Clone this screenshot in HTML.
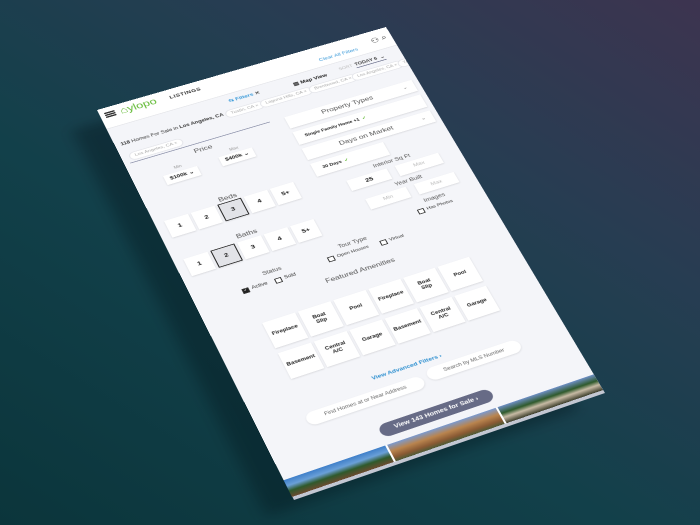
<!DOCTYPE html>
<html><head><meta charset="utf-8"><style>
*{margin:0;padding:0;box-sizing:border-box}
html,body{width:700px;height:525px;overflow:hidden}
body{background:linear-gradient(32deg,#0b353b 0%,#12404a 40%,#273d52 70%,#3d3450 100%);font-family:"Liberation Sans",sans-serif;position:relative}
.sc{position:absolute;left:0;top:0;width:320px;height:560px;transform-origin:0 0;transform:matrix3d(0.948413,-0.256206,0,0.00011732,0.297670,0.605041,0,-0.00017310,0,0,1,0,97,110,0,1)}
.edge{background:#c3c7d2}
.shadow{background:rgba(0,15,20,.35);filter:blur(8px)}
.pg{background:#f4f5f9;overflow:hidden}
.a{position:absolute;white-space:nowrap}
.t{font-size:6px;color:#333}
.lbl{font-size:8.5px;color:#555;transform:translateX(-50%)}
.box{position:absolute;background:#fff;box-shadow:0 1px 2px rgba(0,0,0,.12);font-size:7.5px;font-weight:bold;color:#222;display:flex;align-items:center;justify-content:center;text-align:center;line-height:1.1}
.sel{background:#e2e3e8;border:1.5px solid #222}
.tag{position:absolute;background:#fff;border:1px solid #e4e5ea;border-radius:8px;font-size:5.5px;color:#aaa;padding:2px 5px;white-space:nowrap}
.pill{position:absolute;background:#fff;border-radius:9px;box-shadow:0 1px 2px rgba(0,0,0,.1);font-size:6px;color:#666;display:flex;align-items:center;justify-content:center}
.cb{position:absolute;width:7px;height:7px;border:1px solid #333;background:#fff}
.amen{width:34px;height:36px;font-size:6px}
</style></head><body>
<div class="sc shadow" style="left:-25px;top:20px"></div>
<div class="sc edge" style="left:2px;top:3px"></div>
<div class="sc pg">
 <div class="a" style="left:0;top:0;width:320px;height:30px;background:#fff"></div>
 <div class="a" style="left:5px;top:7px;width:11px;height:1.5px;background:#333;box-shadow:0 3px 0 #333,0 6px 0 #333"></div>
 <div class="a" style="left:21px;top:3px;font-size:13px;color:#5fb931">⌂ylopo</div>
 <div class="a" style="left:74px;top:9px;font-size:6.5px;font-weight:bold;color:#333;letter-spacing:.5px">LISTINGS</div>
 <div class="a" style="left:236px;top:17px;font-size:6.5px;color:#3a9ad9">Clear All Filters</div>
 <div class="a" style="left:297px;top:10px;font-size:10px;color:#222">⚇</div>
 <div class="a" style="left:309px;top:9px;font-size:10px;color:#222">⌕</div>
 <div class="a" style="left:128px;top:37px;font-size:6.5px;font-weight:bold;color:#3a9ad9">⇆ Filters <span style="color:#555">✕</span></div>
 <div class="a" style="left:198px;top:40px;font-size:6.5px;font-weight:bold;color:#222">▥ Map View</div>
 <div class="a" style="left:250px;top:39px;font-size:5.5px;color:#bbb">SORT</div>
 <div class="a" style="left:268px;top:38px;font-size:6px;font-weight:bold;color:#444;border-bottom:1px solid #6a6f8a;padding-bottom:1px">TODAY 6 &nbsp;⌄</div>
 <div class="a" style="left:0;top:30px;width:320px;height:1px;background:#e5e6ea"></div>
 <div class="a t" style="left:6px;top:55px;font-size:6px"><b>118</b> Homes For Sale in <b>Los Angeles, CA</b></div>
 <div class="tag" style="left:118px;top:53px">Tustin, CA ×</div>
 <div class="tag" style="left:156px;top:53px">Laguna Hills, CA ×</div>
 <div class="tag" style="left:210px;top:53px">Brentwood, CA ×</div>
 <div class="tag" style="left:258px;top:53px">Los Angeles, CA ×</div>
 <div class="tag" style="left:310px;top:53px">Tustin, CA</div>
 <div class="tag" style="left:8px;top:72px">Los Angeles, CA ×</div>
 <div class="a" style="left:6px;top:86px;width:150px;height:1px;background:#8a8fa8"></div>

 <div class="a lbl" style="left:80px;top:91px">Price</div>
 <div class="a" style="left:44px;top:108px;font-size:5px;color:#999">Min</div>
 <div class="a" style="left:104px;top:106px;font-size:5px;color:#999">Max</div>
 <div class="box" style="left:30px;top:117px;width:36px;height:14px;font-size:6.5px">$100k ⌄</div>
 <div class="box" style="left:90px;top:114px;width:36px;height:14px;font-size:6.5px">$400k ⌄</div>

 <div class="box" style="left:172px;top:86px;width:142px;height:18px;font-weight:normal;font-size:8.5px;color:#555;justify-content:space-between;padding:0 8px 0 38px">Property Types <span style="font-size:6px;color:#777">⌄</span></div>
 <div class="box" style="left:172px;top:110px;width:142px;height:20px;font-size:5.5px;justify-content:flex-start;padding-left:10px">Single Family Home +1 <span style="color:#5fb931;margin-left:3px">✓</span></div>
 <div class="box" style="left:172px;top:136px;width:142px;height:18px;font-weight:normal;font-size:8.5px;color:#555;justify-content:space-between;padding:0 8px 0 38px">Days on Market <span style="font-size:6px;color:#777">⌄</span></div>
 <div class="box" style="left:172px;top:160px;width:80px;height:20px;font-size:5.5px;justify-content:flex-start;padding-left:10px">30 Days <span style="color:#5fb931;margin-left:3px">✓</span></div>

 <div class="a lbl" style="left:250px;top:186px;font-size:7px">Interior Sq Ft</div>
 <div class="box" style="left:197px;top:197px;width:44px;height:16px">25</div>
 <div class="box" style="left:250px;top:197px;width:48px;height:16px;font-weight:normal;color:#bbb;font-size:6.5px">Max</div>
 <div class="a lbl" style="left:255px;top:219px;font-size:7px">Year Built</div>
 <div class="box" style="left:205px;top:229px;width:44px;height:16px;font-weight:normal;color:#bbb;font-size:6.5px">Min</div>
 <div class="box" style="left:258px;top:229px;width:44px;height:16px;font-weight:normal;color:#bbb;font-size:6.5px">Max</div>
 <div class="a lbl" style="left:270px;top:252px;font-size:7px">Images</div>
 <div class="cb" style="left:247px;top:264px"></div>
 <div class="a t" style="left:257px;top:264px;font-size:5.5px">Has Photos</div>

 <div class="a lbl" style="left:79px;top:166px">Beds</div>
 <div class="box" style="left:10px;top:177px;width:25px;height:25px">1</div>
 <div class="box" style="left:38px;top:177px;width:25px;height:25px">2</div>
 <div class="box sel" style="left:66px;top:177px;width:25px;height:25px">3</div>
 <div class="box" style="left:94px;top:177px;width:25px;height:25px">4</div>
 <div class="box" style="left:122px;top:177px;width:25px;height:25px">5+</div>
 <div class="a lbl" style="left:79px;top:221px">Baths</div>
 <div class="box" style="left:10px;top:234px;width:25px;height:25px">1</div>
 <div class="box sel" style="left:38px;top:234px;width:25px;height:25px">2</div>
 <div class="box" style="left:66px;top:234px;width:25px;height:25px">3</div>
 <div class="box" style="left:94px;top:234px;width:25px;height:25px">4</div>
 <div class="box" style="left:122px;top:234px;width:25px;height:25px">5+</div>

 <div class="a lbl" style="left:171px;top:277px;font-size:7px">Tour Type</div>
 <div class="cb" style="left:140px;top:289px"></div>
 <div class="a t" style="left:150px;top:289px;font-size:5.5px">Open Houses</div>
 <div class="cb" style="left:196px;top:289px"></div>
 <div class="a t" style="left:206px;top:289px;font-size:5.5px">Virtual</div>
 <div class="a lbl" style="left:84px;top:281px;font-size:7px">Status</div>
 <div class="cb" style="left:48px;top:295px;background:#222;color:#fff;font-size:5px;line-height:5px;text-align:center">✓</div>
 <div class="a t" style="left:58px;top:295px;font-size:6px">Active</div>
 <div class="cb" style="left:82px;top:295px"></div>
 <div class="a t" style="left:92px;top:295px;font-size:6px">Sold</div>

 <div class="a lbl" style="left:164px;top:313px">Featured Amenities</div>
 <div class="box amen" style="left:51px;top:345px">Fireplace</div>
 <div class="box amen" style="left:88px;top:345px">Boat<br>Slip</div>
 <div class="box amen" style="left:125px;top:345px">Pool</div>
 <div class="box amen" style="left:162px;top:345px">Fireplace</div>
 <div class="box amen" style="left:199px;top:345px">Boat<br>Slip</div>
 <div class="box amen" style="left:236px;top:345px">Pool</div>
 <div class="box amen" style="left:51px;top:388px">Basement</div>
 <div class="box amen" style="left:88px;top:388px">Central<br>A/C</div>
 <div class="box amen" style="left:125px;top:388px">Garage</div>
 <div class="box amen" style="left:162px;top:388px">Basement</div>
 <div class="box amen" style="left:199px;top:388px">Central<br>A/C</div>
 <div class="box amen" style="left:236px;top:388px">Garage</div>

 <div class="a" style="left:158px;top:452px;transform:translateX(-50%);font-size:6.5px;font-weight:bold;color:#2c8fd0">View Advanced Filters ›</div>
 <div class="pill" style="left:46px;top:470px;width:120px;height:17px">Find Homes at or Near Address</div>
 <div class="pill" style="left:172px;top:465px;width:98px;height:17px">Search by MLS Number</div>
 <div class="a" style="left:0;top:538px;width:320px;height:22px;display:flex">
  <div style="flex:1;background:linear-gradient(180deg,#3f7fc9 0%,#6aa0d8 35%,#2f5a2c 65%,#6b4a2e 100%)"></div>
  <div style="width:2px;background:#fff"></div>
  <div style="flex:1.1;background:linear-gradient(180deg,#7a9ad0 0%,#b9844e 40%,#8a5a34 75%,#4d5a35 100%)"></div>
  <div style="width:2px;background:#fff"></div>
  <div style="flex:1;background:linear-gradient(180deg,#6e8fc6 0%,#2f5a2c 40%,#c8bba5 65%,#3d3e2b 100%)"></div>
 </div>
 <div class="a" style="left:104px;top:512px;width:116px;height:17px;border-radius:9px;background:#676b86;color:#fff;font-size:7px;font-weight:bold;display:flex;align-items:center;justify-content:center">View 143 Homes for Sale ›</div>
</div>
</body></html>
